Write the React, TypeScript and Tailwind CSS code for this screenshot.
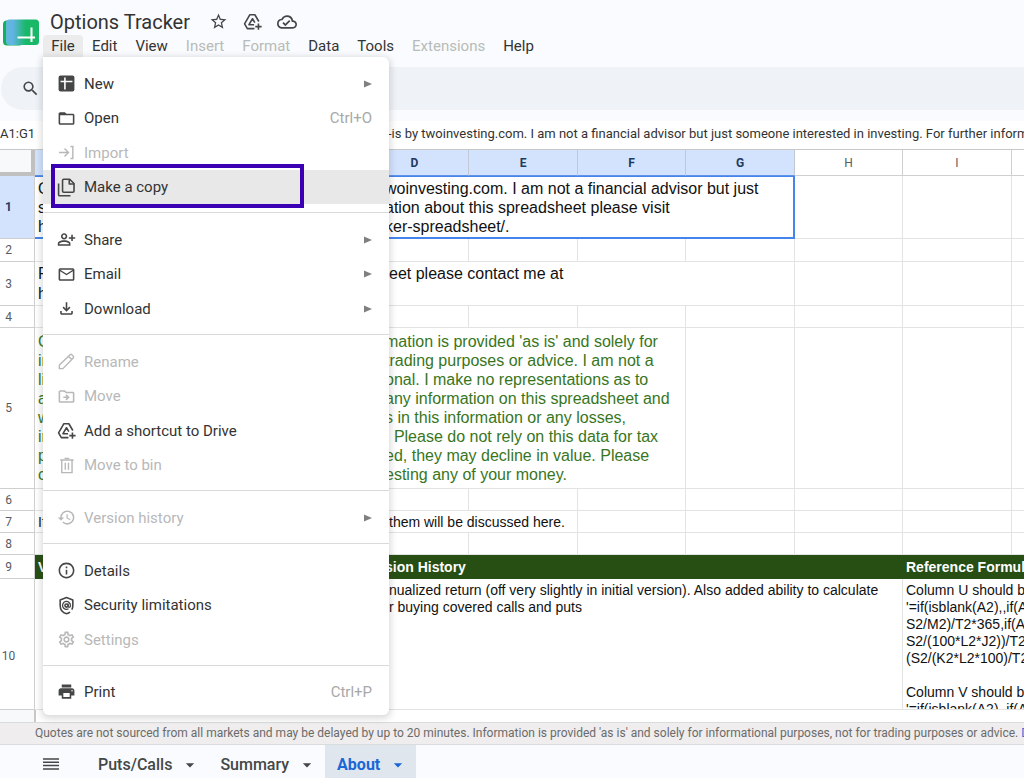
import React from 'react';
import {
  MdArrowDropDown,
  MdFolderOpen,
  MdHistory,
  MdInfoOutline,
  MdMailOutline,
  MdOutlineCloudDone,
  MdOutlineDriveFileMove,
  MdOutlineFileDownload,
  MdOutlinePersonAddAlt,
  MdOutlineSettings,
  MdPrint,
  MdSearch,
  MdStarOutline,
} from 'react-icons/md';

type IconProps = { className?: string };
type Icon = React.ComponentType<IconProps>;

function SheetsLogo() {
  return (
    <svg viewBox="0 0 36 27" className="h-[27px] w-9" aria-hidden="true">
      <defs>
        <linearGradient id="logo-fill" x1="0" x2="1">
          <stop offset="0" stopColor="#5fb8d8" />
          <stop offset="0.2" stopColor="#62b4e4" />
          <stop offset="0.6" stopColor="#18b868" />
        </linearGradient>
      </defs>
      <rect width="20" height="25" y="1.500" rx="4" fill="#13b05b" />
      <rect x="3" y="0.500" width="33" height="25.500" rx="3.500" fill="url(#logo-fill)" />
      <path d="M14.500 18.500H32M28.500 8.500V23" stroke="#fff" strokeWidth="2" fill="none" />
    </svg>
  );
}

function NewIcon({ className }: IconProps) {
  return (
    <svg viewBox="0 0 24 24" className={className} fill="none" aria-hidden="true">
      <rect x="2" y="2" width="20" height="20" rx="2.500" fill="currentColor" />
      <path d="M4.500 9.500h15M10 4.500v15" stroke="#fff" strokeWidth="2" />
    </svg>
  );
}

function ImportIcon({ className }: IconProps) {
  return (
    <svg viewBox="0 0 24 24" className={className} fill="none" stroke="currentColor" strokeWidth="1.800" aria-hidden="true">
      <path d="M2.500 12h12M9.500 7l5 5-5 5M17 4.500h3v15h-3" />
    </svg>
  );
}

function CopyIcon({ className }: IconProps) {
  return (
    <svg viewBox="0 0 24 24" className={className} fill="none" stroke="currentColor" strokeWidth="2" strokeLinejoin="round" aria-hidden="true">
      <path d="M8.500 1.500h7.500l5.500 5.500v9.500a1.500 1.500 0 0 1-1.500 1.500H8.500A1.500 1.500 0 0 1 7 16.500V3a1.500 1.500 0 0 1 1.500-1.500z" />
      <path d="M15.500 1.500v6h6" />
      <path d="M2 7v14a1.500 1.500 0 0 0 1.500 1.500H17" />
    </svg>
  );
}

function DriveAddIcon({ className }: IconProps) {
  return (
    <svg viewBox="0 0 24 24" className={className} fill="none" stroke="currentColor" strokeWidth="2" strokeLinejoin="round" aria-hidden="true">
      <path d="M14.500 21H5.500L2 15 8.500 3.500h6.500L20 12" />
      <path d="M14 16H7.500L12 8.500l3 5" />
      <path d="M19.500 14.500v8M15.500 18.500h8" />
    </svg>
  );
}

function PencilIcon({ className }: IconProps) {
  return (
    <svg viewBox="0 0 24 24" className={className} fill="none" stroke="currentColor" strokeWidth="1.800" strokeLinejoin="round" aria-hidden="true">
      <path d="M3 21v-4.500L16.500 3.500c.7-.7 1.500-.7 2.200 0l1.800 1.800c.7.7.7 1.500 0 2.200L7.500 21zM14.500 5.500l4 4" />
    </svg>
  );
}

function BinIcon({ className }: IconProps) {
  return (
    <svg viewBox="0 0 24 24" className={className} fill="none" stroke="currentColor" strokeWidth="1.800" aria-hidden="true">
      <path d="M4 5h17M9.500 3h6M6 5v16h13V5M10.500 8.500v9M14.500 8.500v9" />
    </svg>
  );
}

function ShieldIcon({ className }: IconProps) {
  return (
    <svg viewBox="0 0 24 24" className={className} fill="none" stroke="currentColor" strokeWidth="2" strokeLinejoin="round" aria-hidden="true">
      <path d="M16.500 20.500c-1.300 1-2.800 1.600-4.500 2-5-1.300-8-5.700-8-10.500V5l8-3 8 3v7c0 2-.5 3.700-1.300 5.200" />
      <circle cx="12" cy="12" r="2" />
      <path d="M14.500 16.200A5 5 0 1 1 17 12v.7c0 2-3 2-3 0V9.500" strokeWidth="1.600" />
    </svg>
  );
}

function AllSheetsIcon({ className }: IconProps) {
  return (
    <svg viewBox="0 0 16 12" className={className} stroke="currentColor" strokeWidth="1.500" aria-hidden="true">
      <path d="M0 1h16M0 4.300h16M0 7.600h16M0 10.900h16" />
    </svg>
  );
}

type MenuEntry = {
  label: string;
  icon: Icon;
  disabled?: boolean;
  submenu?: boolean;
  shortcut?: string;
  active?: boolean;
};

const menuGroups: MenuEntry[][] = [
  [
    { label: 'New', icon: NewIcon, submenu: true },
    { label: 'Open', icon: MdFolderOpen, shortcut: 'Ctrl+O' },
    { label: 'Import', icon: ImportIcon, disabled: true },
    { label: 'Make a copy', icon: CopyIcon, active: true },
  ],
  [
    { label: 'Share', icon: MdOutlinePersonAddAlt, submenu: true },
    { label: 'Email', icon: MdMailOutline, submenu: true },
    { label: 'Download', icon: MdOutlineFileDownload, submenu: true },
  ],
  [
    { label: 'Rename', icon: PencilIcon, disabled: true },
    { label: 'Move', icon: MdOutlineDriveFileMove, disabled: true },
    { label: 'Add a shortcut to Drive', icon: DriveAddIcon },
    { label: 'Move to bin', icon: BinIcon, disabled: true },
  ],
  [{ label: 'Version history', icon: MdHistory, disabled: true, submenu: true }],
  [
    { label: 'Details', icon: MdInfoOutline },
    { label: 'Security limitations', icon: ShieldIcon },
    { label: 'Settings', icon: MdOutlineSettings, disabled: true },
  ],
  [{ label: 'Print', icon: MdPrint, shortcut: 'Ctrl+P' }],
];

function MenuItem({ label, icon: ItemIcon, disabled, submenu, shortcut, active }: MenuEntry) {
  return (
    <button
      type="button"
      role="menuitem"
      disabled={disabled}
      className={`relative flex h-[34px] w-full items-center pl-3.5 pr-[17px] text-left leading-5 odd:h-[35px] ${
        active ? 'bg-[#e8e8e8]' : ''
      } ${disabled ? 'text-[#b8b8b8]' : 'text-[#444746]'}`}
    >
      <ItemIcon className="mr-2 h-[19px] w-[19px] shrink-0" />
      <span className={`flex-1 ${disabled ? '' : 'text-[#333]'}`}>{label}</span>
      {submenu && (
        <svg viewBox="0 0 8 8" className="h-2 w-2 fill-[#808080]" aria-hidden="true">
          <path d="M0 0.500 8 4 0 7.500z" />
        </svg>
      )}
      {shortcut && <span className="text-[#a8a8a8]">{shortcut}</span>}
      {active && <span className="absolute -top-1.5 -bottom-1 left-2 w-[253px] border-4 border-[#3b00b3]" />}
    </button>
  );
}

function FileMenu() {
  return (
    <div
      role="menu"
      aria-label="File"
      className="absolute left-0 top-full z-20 w-[346px] divide-y divide-[#dadada] rounded-b-md rounded-tr-md bg-white text-[15px] shadow-[0_2px_6px_2px_rgba(60,64,67,0.18)]"
    >
      {menuGroups.map((group, i) => (
        <div key={i} className="pb-2 pt-[9px] last:pb-1.5 last:pt-2">
          {group.map((entry) => (
            <MenuItem key={entry.label} {...entry} />
          ))}
        </div>
      ))}
    </div>
  );
}

const menuBar = [
  { label: 'Edit' },
  { label: 'View' },
  { label: 'Insert', disabled: true },
  { label: 'Format', disabled: true },
  { label: 'Data' },
  { label: 'Tools' },
  { label: 'Extensions', disabled: true },
  { label: 'Help' },
];

function Header() {
  return (
    <header className="flex pl-[3px]">
      <div className="mt-[19px] w-10 shrink-0">
        <SheetsLogo />
      </div>
      <div className="pt-2">
        <div className="flex h-[27px] items-center gap-[15px] pl-[7px] text-[#444746]">
          <h1 className="mr-1 text-[20px] text-[#333]">Options Tracker</h1>
          <button type="button" aria-label="Star">
            <MdStarOutline className="h-[19px] w-[19px]" />
          </button>
          <button type="button" aria-label="Add shortcut to Drive">
            <DriveAddIcon className="h-[19px] w-[19px]" />
          </button>
          <button type="button" aria-label="Document status">
            <MdOutlineCloudDone className="h-5 w-5" />
          </button>
        </div>
        <nav className="relative flex h-[22px] items-center text-[15px] text-[#333]">
          <button type="button" aria-expanded="true" className="h-full w-10 rounded-t bg-[#ececec]">
            File
          </button>
          {menuBar.map(({ label, disabled }) => (
            <button key={label} type="button" disabled={disabled} className="px-[9px] disabled:text-[#b8bbb8]">
              {label}
            </button>
          ))}
          <FileMenu />
        </nav>
      </div>
    </header>
  );
}

// Every line is a left fragment followed by the part that shows right of the menu.
type Line = [string, string];

function CellLines({ lines, wide }: { lines: Line[]; wide?: boolean }) {
  return (
    <>
      {lines.map(([left, right], i) => (
        <div key={i} className="flex whitespace-pre">
          <span className={wide ? 'w-[351px] shrink-0' : 'w-[347px] shrink-0'}>{left}</span>
          <span>{right}</span>
        </div>
      ))}
    </>
  );
}

const columns = ['A', 'B', 'C', 'D', 'E', 'F', 'G', 'H', 'I', 'J'];

const introLines: Line[] = [
  ['O', 'woinvesting.com. I am not a financial advisor but just'],
  ['s', 'ation about this spreadsheet please visit'],
  ['h', 'ker-spreadsheet/.'],
];

const contactLines: Line[] = [
  ['F', 'eet please contact me at'],
  ['h', ''],
];

const disclaimerLines: Line[] = [
  ['G', 'mation is provided \'as is\' and solely for'],
  ['in', 'trading purposes or advice. I am not a'],
  ['li', 'onal. I make no representations as to'],
  ['a', 'any information on this spreadsheet and'],
  ['w', 's in this information or any losses,'],
  ['in', '. Please do not rely on this data for tax'],
  ['p', 'ed, they may decline in value. Please'],
  ['c', 'esting any of your money.'],
];

const formulaLines = [
  'Column U should be',
  "'=if(isblank(A2),,if(A2",
  'S2/M2)/T2*365,if(A2',
  'S2/(100*L2*J2))/T2',
  '(S2/(K2*L2*100)/T2',
  ' ',
  'Column V should be',
  "'=if(isblank(A2),,if(A2",
];

type RowProps = { n: number; height: string; selected?: boolean; tall?: boolean; children: React.ReactNode };

function Row({ n, height, selected, tall, children }: RowProps) {
  return (
    <tr className={height}>
      <th
        scope="row"
        className={`border-b border-r border-[#cfcfcf] pr-[17px] font-[Roboto,sans-serif] text-[12px] leading-4 ${
          tall ? 'pt-6' : ''
        } ${selected ? 'bg-[#d3e3fd] font-bold text-[#1f3a5f]' : 'bg-white font-normal text-[#575b5f]'}`}
      >
        {n}
      </th>
      {children}
    </tr>
  );
}

function Blank({ count }: { count: number }) {
  return (
    <>
      {Array.from({ length: count }, (_, i) => (
        <td key={i} className="border-b border-r border-[#e2e3e3]" />
      ))}
    </>
  );
}

function Grid() {
  return (
    <table className="w-[1120px] table-fixed border-separate border-spacing-0 border-t border-[#c8c8c8] bg-white font-['Liberation_Sans',Arial,sans-serif] text-[#111]">
      <colgroup>
        <col className="w-[35px]" />
        {columns.map((c) => (
          <col key={c} className="even:w-[109px] odd:w-[108px]" />
        ))}
      </colgroup>
      <thead>
        <tr className="h-[26px] font-[Roboto,sans-serif] text-[12px]">
          <th className="border-b-4 border-r-4 border-[#c0c0c0] bg-[#f8f9fa]" />
          {columns.map((c, i) => (
            <th
              key={c}
              scope="col"
              className={
                i < 7
                  ? 'border-b border-r border-b-[#5f93e8] border-r-[#c0c8d4] bg-[#d3e3fd] font-bold text-[#1f3a5f]'
                  : 'border-b border-r border-[#cfcfcf] font-normal text-[#575b5f]'
              }
            >
              {c}
            </th>
          ))}
        </tr>
      </thead>
      <tbody>
        <Row n={1} height="h-[63px]" selected>
          <td colSpan={7} className="border-b-2 border-r-2 border-t border-[#4484ec] pl-[3px] align-top text-[16px] leading-[19px]">
            <div className="pt-0.5">
              <CellLines lines={introLines} />
            </div>
          </td>
          <Blank count={3} />
        </Row>
        <Row n={2} height="h-[23px]">
          <Blank count={10} />
        </Row>
        <Row n={3} height="h-[44px]">
          <td colSpan={7} className="border-b border-r border-[#e2e3e3] pl-[3px] align-top text-[16px] leading-5">
            <div className="pt-0.5">
              <CellLines lines={contactLines} wide />
            </div>
          </td>
          <Blank count={3} />
        </Row>
        <Row n={4} height="h-[22px]">
          <Blank count={10} />
        </Row>
        <Row n={5} height="h-[161px]">
          <td colSpan={6} className="border-b border-r border-[#e2e3e3] pl-[3px] align-middle text-[16px] leading-[19px] text-[#38761d]">
            <CellLines lines={disclaimerLines} />
          </td>
          <Blank count={4} />
        </Row>
        <Row n={6} height="h-[22px]">
          <Blank count={10} />
        </Row>
        <Row n={7} height="h-[22px]">
          <td colSpan={5} className="border-b border-r border-[#e2e3e3] pl-[3px] text-[14px] leading-5">
            <CellLines wide lines={[['If', 'them will be discussed here.']]} />
          </td>
          <Blank count={5} />
        </Row>
        <Row n={8} height="h-[22px]">
          <Blank count={10} />
        </Row>
        <Row n={9} height="h-[24px]">
          <td colSpan={8} className="bg-[#274e13] pl-[3px] text-[14px] font-bold leading-5 text-white">
            <CellLines lines={[['V', 'sion History']]} />
          </td>
          <td colSpan={2} className="bg-[#274e13] pl-[3px] text-[14px] font-bold leading-5 text-white">
            Reference Formulas
          </td>
        </Row>
        <Row n={10} height="h-[131px]" tall>
          <td colSpan={8} className="border-b border-r border-[#e2e3e3] pl-[3px] pt-[3px] align-top text-[14px] leading-[17px]">
            <CellLines
              wide
              lines={[
                ['', 'nualized return (off very slightly in initial version). Also added ability to calculate'],
                ['', 'r buying covered calls and puts'],
              ]}
            />
          </td>
          <td colSpan={2} className="border-b border-[#e2e3e3] p-0 align-top text-[14px] leading-[17px]">
            <div className="h-[130px] overflow-hidden pl-[3px] pt-[3px]">
              {formulaLines.map((line, i) => (
                <div key={i} className="whitespace-pre">{line}</div>
              ))}
            </div>
          </td>
        </Row>
      </tbody>
    </table>
  );
}

const sheets = [{ name: 'Puts/Calls' }, { name: 'Summary' }, { name: 'About', current: true }];

export default function App() {
  return (
    <div className="min-h-screen overflow-hidden bg-white font-[Roboto,sans-serif]">
      <div className="bg-[#f9fbfe] pb-[11px]">
        <Header />
        <div className="ml-px mt-2.5 flex h-[43px] items-center rounded-l-full bg-[#eff3f8] pl-5 text-[#444746]">
          <button type="button" aria-label="Search the menus">
            <MdSearch className="h-[19px] w-[19px]" />
          </button>
        </div>
      </div>
      <div className="flex h-7 items-center pb-0.5 text-[#333]">
        <input aria-label="Name box" defaultValue="A1:G1" className="w-[43px] shrink-0 text-[13px] outline-none" />
        <span className="ml-[345px] whitespace-nowrap text-[13px]">
          -is by twoinvesting.com. I am not a financial advisor but just someone interested in investing. For further information
        </span>
      </div>
      <Grid />
      <div className="flex h-3 bg-white">
        <div className="w-9 border-r-2 border-[#c8c8c8] bg-[#f8f9fa]" />
      </div>
      <div className="h-[23px] whitespace-nowrap border-y border-[#d8dcdc] bg-[#efeded] pl-[35px] text-[12px] leading-[21px] text-[#6b6b6b]">
        Quotes are not sourced from all markets and may be delayed by up to 20 minutes. Information is provided 'as is' and
        solely for informational purposes, not for trading purposes or advice.{' '}
        <a href="#disclaimer" className="text-[#2a6fdb]">Disclaimer</a>
      </div>
      <footer className="flex h-[33px] items-center bg-[#f9fbfe] text-[16px] font-medium text-[#444746]">
        <button type="button" aria-label="All sheets" className="ml-[43px] mr-[27px] pt-1">
          <AllSheetsIcon className="h-3 w-4" />
        </button>
        {sheets.map(({ name, current }) => (
          <button
            key={name}
            type="button"
            className={`flex h-full items-center gap-2 pl-3 pr-2 pt-1.5 ${
              current ? 'bg-[#dfe6ed] font-bold text-[#1a66d6]' : ''
            }`}
          >
            {name}
            <MdArrowDropDown className="h-5 w-5" />
          </button>
        ))}
      </footer>
    </div>
  );
}
